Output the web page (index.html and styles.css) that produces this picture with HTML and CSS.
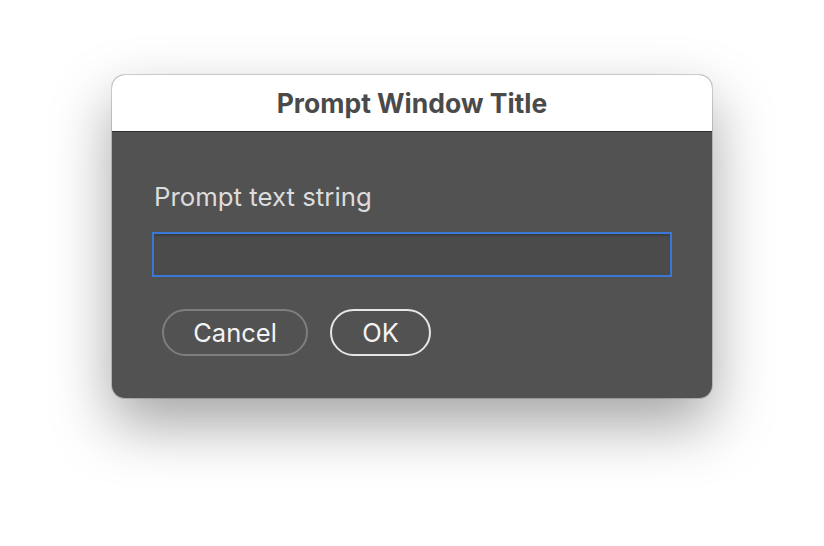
FILE: index.html
```html
<!DOCTYPE html>
<html>
<head>
<meta charset="utf-8">
<link rel="stylesheet" href="styles.css">
</head>
<body>
<div class="page">
  <div class="window">
    <div class="titlebar">Prompt Window Title</div>
    <div class="content">
      <div class="label">Prompt text string</div>
      <div class="field"></div>
      <div class="buttons">
        <div class="btn cancel">Cancel</div>
        <div class="btn ok">OK</div>
      </div>
    </div>
  </div>
</div>
</body>
</html>
```

FILE: styles.css
```css
html, body {
  margin: 0;
  padding: 0;
  background: #ffffff;
}
.page {
  width: 824px;
  height: 546px;
  display: flex;
  justify-content: center;
  align-items: flex-start;
  padding-top: 75px;
  box-sizing: border-box;
  font-family: Inter, "Liberation Sans", sans-serif;
}
.window {
  width: 600px;
  height: 323px;
  border-radius: 13px;
  overflow: hidden;
  background: #525252;
  box-shadow: 0 0 0 1px rgba(0,0,0,0.16), 0 26px 60px rgba(0,0,0,0.36);
  display: flex;
  flex-direction: column;
}
.titlebar {
  height: 57px;
  background: #ffffff;
  border-bottom: 1px solid #2e2e2e;
  display: flex;
  align-items: center;
  justify-content: center;
  font-weight: 700;
  font-size: 26.5px;
  color: #4a4a4a;
  box-sizing: border-box;
}
.content {
  flex: 1;
  padding: 0 40px 0 40px;
  display: flex;
  flex-direction: column;
}
.label {
  margin-top: 50px;
  font-size: 25.8px;
  line-height: 30px;
  color: #dcdcdc;
  padding-left: 2px;
}
.field {
  margin-top: 20px;
  width: 520px;
  height: 45px;
  box-sizing: border-box;
  border: 2px solid #3a78d8;
  background: #4b4b4b;
  box-shadow: inset 0 2px 2px rgba(0,0,0,0.18);
}
.buttons {
  margin-top: 32px;
  display: flex;
  gap: 22px;
  padding-left: 10px;
}
.btn {
  height: 47px;
  box-sizing: border-box;
  border-radius: 24px;
  display: flex;
  align-items: center;
  justify-content: center;
  font-size: 25.5px;
  color: #f4f4f4;
}
.cancel {
  width: 146px;
  border: 2px solid #7e7e7e;
}
.ok {
  width: 101px;
  border: 2px solid #e6e6e6;
}
```
